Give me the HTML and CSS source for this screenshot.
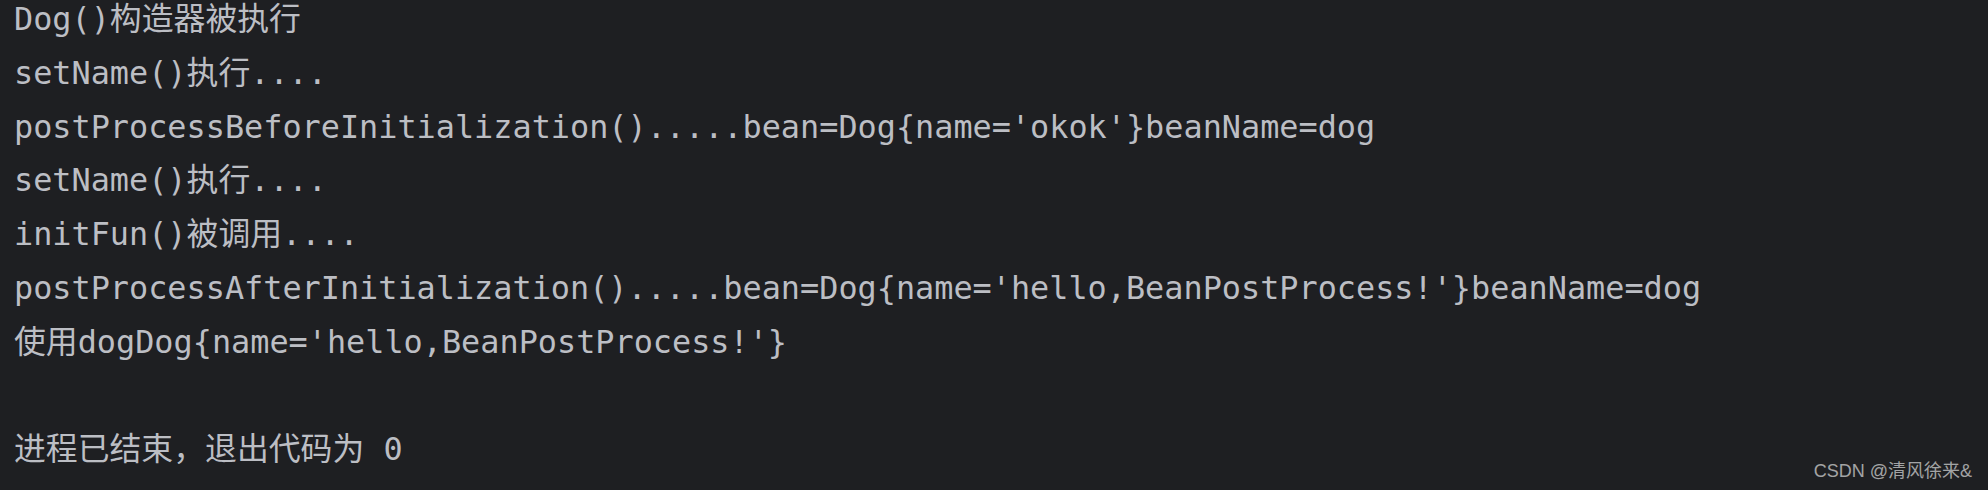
FILE: index.html
```html
<!DOCTYPE html>
<html lang="zh-CN">
<head>
<meta charset="utf-8">
<link rel="stylesheet" href="styles.css">
</head>
<body>
<div class="console">
  <div class="line">Dog()构造器被执行</div>
  <div class="line">setName()执行....</div>
  <div class="line">postProcessBeforeInitialization().....bean=Dog{name='okok'}beanName=dog</div>
  <div class="line">setName()执行....</div>
  <div class="line">initFun()被调用....</div>
  <div class="line">postProcessAfterInitialization().....bean=Dog{name='hello,BeanPostProcess!'}beanName=dog</div>
  <div class="line">使用dogDog{name='hello,BeanPostProcess!'}</div>
  <div class="line"> </div>
  <div class="line">进程已结束，退出代码为 0</div>
</div>
<div class="watermark">CSDN @清风徐来&amp;</div>
</body>
</html>
```
FILE: styles.css
```css
html, body {
  margin: 0;
  padding: 0;
  background: #1e1f22;
  width: 1988px;
  height: 490px;
  overflow: hidden;
}
body {
  position: relative;
}
.console {
  display: flex;
  flex-direction: column;
  margin-top: -7px;
  padding-left: 14px;
  font-family: "DejaVu Sans Mono", "Noto Sans CJK SC", monospace;
  font-size: 31.85px;
  line-height: 53.8px;
  color: #bcbec4;
}
.line {
  white-space: pre;
  height: 53.8px;
}
.watermark {
  position: absolute;
  right: 16px;
  bottom: 8px;
  font-family: "Liberation Sans", "Noto Sans CJK SC", sans-serif;
  font-size: 18px;
  line-height: 22px;
  color: rgba(255, 255, 255, 0.6);
}
```
